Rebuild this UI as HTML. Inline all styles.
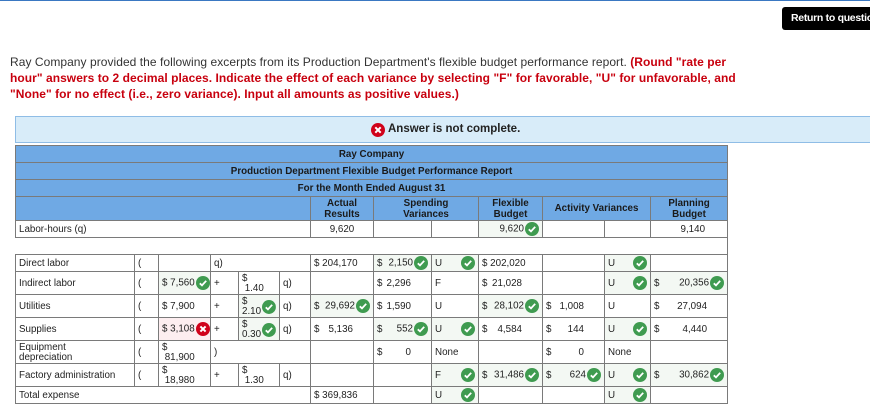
<!DOCTYPE html>
<html><head><meta charset="utf-8"><style>
*{margin:0;padding:0;box-sizing:border-box}
body{width:870px;height:416px;overflow:hidden;background:#fff;font-family:"Liberation Sans",Arial,sans-serif;color:#222;position:relative}
.topline{position:absolute;left:0;top:0;width:870px;height:1px;background:#3a78c2}
.btn{position:absolute;left:782px;top:7px;width:100px;height:23px;background:#000;border-radius:3px;color:#fff;font-weight:bold;font-size:10.5px;line-height:23px;padding-left:9px;letter-spacing:-0.3px;white-space:nowrap}
.para{position:absolute;left:10px;top:54px;width:800px;font-size:12px;line-height:16px;color:#333;letter-spacing:0.05px;white-space:nowrap}
.para b{color:#c8000e}
.banner{position:absolute;left:15px;top:116px;width:860px;height:27px;background:#d8ecf9;border:1px solid #8fbde6;font-size:11.5px;font-weight:bold;line-height:25px}
.banner span{position:absolute;left:355px;top:0;display:flex;align-items:center;gap:3px}
table{position:absolute;left:15px;top:145px;border-collapse:collapse;table-layout:fixed;width:712px;font-size:9.8px}
td{border:1px solid #7a7a7a;padding:0 3px;white-space:nowrap;overflow:hidden;vertical-align:middle}
tr.h td{background:#6fa9e4;text-align:center;height:17px;font-weight:bold;color:#1a1a1a}
tr.ch td{height:24px;line-height:11px;font-weight:bold;color:#1a1a1a}
tr.r1 td{height:17px}
tr.r2 td{height:23px}
.g{background:#f3f8f3}
.p{background:#fdeef0}
.r{text-align:right}
.c{text-align:center}
.f{display:flex;justify-content:space-between;align-items:center}
.ic{display:inline-block;width:14px;height:14px;vertical-align:middle;margin-left:1px}
.st{line-height:10px;padding-top:1px}
</style></head><body>
<div class="topline"></div>
<div class="btn">Return to question</div>
<div class="para">Ray Company provided the following excerpts from its Production Department's flexible budget performance report. <b>(Round "rate per<br>hour" answers to 2 decimal places. Indicate the effect of each variance by selecting "F" for favorable, "U" for unfavorable, and<br>"None" for no effect (i.e., zero variance). Input all amounts as positive values.)</b></div>
<div class="banner"><span><svg width="14" height="14" viewBox="0 0 14 14"><circle cx="7" cy="7" r="7" fill="#d0021b"/><path d="M4.3 4.3L9.7 9.7M9.7 4.3L4.3 9.7" stroke="#fff" stroke-width="2"/></svg>Answer is not complete.</span></div>

<svg width="0" height="0" style="position:absolute"><defs>
<symbol id="ok" viewBox="0 0 14 14"><circle cx="7" cy="7" r="7" fill="#3f9b50"/><path d="M3.8 7.3L6 9.4L10.2 4.8" stroke="#fff" stroke-width="1.8" fill="none"/></symbol>
<symbol id="no" viewBox="0 0 14 14"><circle cx="7" cy="7" r="7" fill="#d0021b"/><path d="M4.4 4.4L9.6 9.6M9.6 4.4L4.4 9.6" stroke="#fff" stroke-width="2"/></symbol>
</defs></svg>

<table>
<colgroup><col style="width:119px"><col style="width:24px"><col style="width:52px"><col style="width:28px"><col style="width:41px"><col style="width:31px"><col style="width:63px"><col style="width:58px"><col style="width:47px"><col style="width:64px"><col style="width:62px"><col style="width:46px"><col style="width:77px"></colgroup>
<tr class="h"><td colspan="13">Ray Company</td></tr>
<tr class="h"><td colspan="13">Production Department Flexible Budget Performance Report</td></tr>
<tr class="h"><td colspan="13">For the Month Ended August 31</td></tr>
<tr class="h ch"><td colspan="6"></td><td class="c">Actual<br>Results</td><td colspan="2" class="c">Spending<br>Variances</td><td class="c">Flexible<br>Budget</td><td colspan="2" class="c">Activity Variances</td><td class="c">Planning<br>Budget</td></tr>
<tr class="r1"><td colspan="6">Labor-hours (q)</td><td class="c">9,620</td><td></td><td></td><td class="g r">9,620<svg class="ic"><use href="#ok"/></svg></td><td></td><td></td><td class="r" style="padding-right:22px">9,140</td></tr>
<tr class="r1"><td colspan="13" style="border-left:none"></td></tr>
<tr class="r1"><td>Direct labor</td><td>(</td><td></td><td colspan="3">q)</td><td>$ 204,170</td><td class="g"><div class="f"><span>$</span><span>2,150<svg class="ic"><use href="#ok"/></svg></span></div></td><td class="g"><div class="f"><span>U</span><svg class="ic"><use href="#ok"/></svg></div></td><td>$ 202,020</td><td></td><td class="g"><div class="f"><span>U</span><svg class="ic"><use href="#ok"/></svg></div></td><td></td></tr>
<tr class="r2"><td>Indirect labor</td><td>(</td><td class="g">$ 7,560<svg class="ic"><use href="#ok"/></svg></td><td>+</td><td class="st">$<br>&nbsp;1.40</td><td>q)</td><td></td><td><div class="f"><span>$</span><span style="margin-right:17px">2,296</span></div></td><td>F</td><td><div class="f"><span>$</span><span style="margin-right:17px">21,028</span></div></td><td></td><td class="g"><div class="f"><span>U</span><svg class="ic"><use href="#ok"/></svg></div></td><td class="g"><div class="f"><span>$</span><span>20,356<svg class="ic"><use href="#ok"/></svg></span></div></td></tr>
<tr class="r2"><td>Utilities</td><td>(</td><td>$ 7,900</td><td>+</td><td class="g st"><div class="f"><span>$<br>2.10</span><svg class="ic"><use href="#ok"/></svg></div></td><td>q)</td><td class="g"><div class="f"><span>$</span><span>29,692<svg class="ic"><use href="#ok"/></svg></span></div></td><td><div class="f"><span>$</span><span style="margin-right:17px">1,590</span></div></td><td>U</td><td class="g"><div class="f"><span>$</span><span>28,102<svg class="ic"><use href="#ok"/></svg></span></div></td><td><div class="f"><span>$</span><span style="margin-right:17px">1,008</span></div></td><td>U</td><td><div class="f"><span>$</span><span style="margin-right:17px">27,094</span></div></td></tr>
<tr class="r2"><td>Supplies</td><td>(</td><td class="p">$ 3,108<svg class="ic"><use href="#no"/></svg></td><td>+</td><td class="g st"><div class="f"><span>$<br>0.30</span><svg class="ic"><use href="#ok"/></svg></div></td><td>q)</td><td><div class="f"><span>$</span><span style="margin-right:17px">5,136</span></div></td><td class="g"><div class="f"><span>$</span><span>552<svg class="ic"><use href="#ok"/></svg></span></div></td><td class="g"><div class="f"><span>U</span><svg class="ic"><use href="#ok"/></svg></div></td><td><div class="f"><span>$</span><span style="margin-right:17px">4,584</span></div></td><td><div class="f"><span>$</span><span style="margin-right:17px">144</span></div></td><td class="g"><div class="f"><span>U</span><svg class="ic"><use href="#ok"/></svg></div></td><td><div class="f"><span>$</span><span style="margin-right:17px">4,440</span></div></td></tr>
<tr class="r2"><td class="st">Equipment<br>depreciation</td><td>(</td><td class="st">$<br>&nbsp;81,900</td><td colspan="3">)</td><td></td><td><div class="f"><span>$</span><span style="margin-right:17px">0</span></div></td><td>None</td><td></td><td><div class="f"><span>$</span><span style="margin-right:17px">0</span></div></td><td>None</td><td></td></tr>
<tr class="r2"><td>Factory administration</td><td>(</td><td class="st">$<br>&nbsp;18,980</td><td>+</td><td class="st">$<br>&nbsp;1.30</td><td>q)</td><td></td><td></td><td class="g"><div class="f"><span>F</span><svg class="ic"><use href="#ok"/></svg></div></td><td class="g"><div class="f"><span>$</span><span>31,486<svg class="ic"><use href="#ok"/></svg></span></div></td><td class="g"><div class="f"><span>$</span><span>624<svg class="ic"><use href="#ok"/></svg></span></div></td><td class="g"><div class="f"><span>U</span><svg class="ic"><use href="#ok"/></svg></div></td><td class="g"><div class="f"><span>$</span><span>30,862<svg class="ic"><use href="#ok"/></svg></span></div></td></tr>
<tr class="r1"><td colspan="6">Total expense</td><td>$ 369,836</td><td></td><td class="g"><div class="f"><span>U</span><svg class="ic"><use href="#ok"/></svg></div></td><td></td><td></td><td class="g"><div class="f"><span>U</span><svg class="ic"><use href="#ok"/></svg></div></td><td></td></tr>
</table>
</body></html>
